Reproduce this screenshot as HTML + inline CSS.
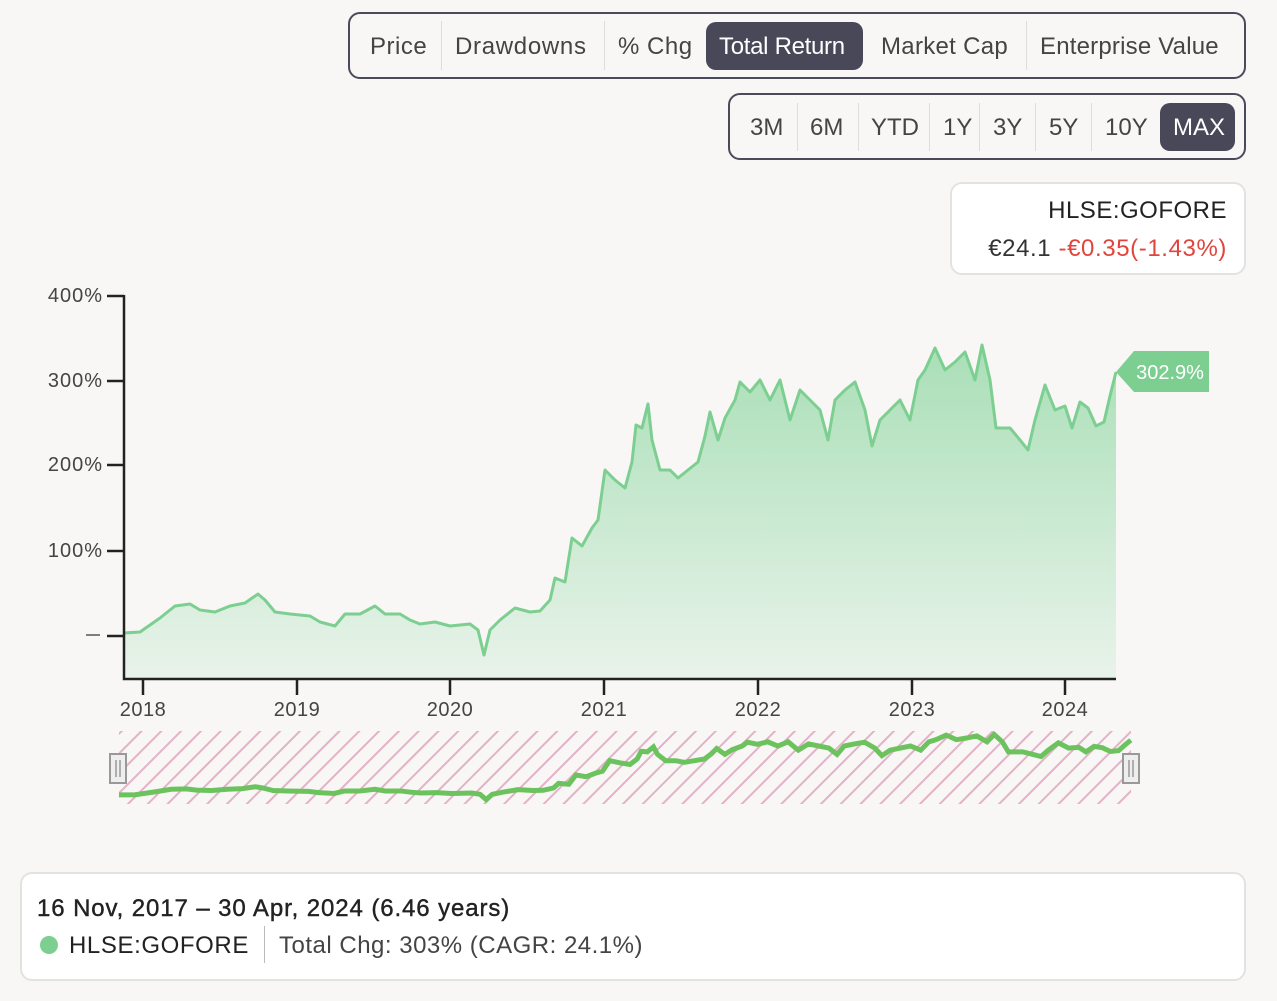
<!DOCTYPE html>
<html><head><meta charset="utf-8"><style>
*{margin:0;padding:0;box-sizing:border-box}
body{width:1277px;height:1001px;background:#f8f7f5;font-family:"Liberation Sans",sans-serif;position:relative;overflow:hidden;color:#333}
.box{position:absolute;border:2px solid #4a4a5a;border-radius:12px}
.t{position:absolute;font-size:24px;color:#444;white-space:nowrap;line-height:1}
.act{position:absolute;background:#494858;border-radius:10px}
.sep{position:absolute;width:1px;background:#ddd}
</style></head><body>
<div class="box" style="left:348px;top:12px;width:898px;height:67px"></div>
<div class="act" style="left:706px;top:22px;width:157px;height:48px"></div>
<div class="sep" style="left:441px;top:21px;height:49px"></div>
<div class="sep" style="left:604px;top:21px;height:49px"></div>
<div class="sep" style="left:1026px;top:21px;height:49px"></div>
<div class="t" style="left:370px;top:35px;letter-spacing:0.5px">Price</div>
<div class="t" style="left:455px;top:35px;letter-spacing:0.7px">Drawdowns</div>
<div class="t" style="left:618px;top:35px;letter-spacing:0.5px">% Chg</div>
<div class="t" style="left:719px;top:35px;color:#fff;letter-spacing:-0.3px">Total Return</div>
<div class="t" style="left:881px;top:35px;letter-spacing:0.3px">Market Cap</div>
<div class="t" style="left:1040px;top:35px;letter-spacing:0.2px">Enterprise Value</div>

<div class="box" style="left:728px;top:93px;width:518px;height:67px"></div>
<div class="act" style="left:1160px;top:103px;width:75px;height:48px"></div>
<div class="sep" style="left:797px;top:103px;height:48px"></div>
<div class="sep" style="left:858px;top:103px;height:48px"></div>
<div class="sep" style="left:929px;top:103px;height:48px"></div>
<div class="sep" style="left:979px;top:103px;height:48px"></div>
<div class="sep" style="left:1035px;top:103px;height:48px"></div>
<div class="sep" style="left:1091px;top:103px;height:48px"></div>
<div class="t" style="left:750px;top:116px">3M</div>
<div class="t" style="left:810px;top:116px">6M</div>
<div class="t" style="left:871px;top:116px">YTD</div>
<div class="t" style="left:943px;top:116px">1Y</div>
<div class="t" style="left:993px;top:116px">3Y</div>
<div class="t" style="left:1049px;top:116px">5Y</div>
<div class="t" style="left:1105px;top:116px">10Y</div>
<div class="t" style="left:1173px;top:116px;color:#fff">MAX</div>

<div style="position:absolute;left:950px;top:182px;width:296px;height:93px;background:#fff;border:2px solid #e2e2e0;border-radius:12px"></div>
<div class="t" style="right:50px;top:199px;color:#222;letter-spacing:0.5px">HLSE:GOFORE</div>
<div class="t" style="right:50px;top:237px;color:#333;letter-spacing:0.6px">€24.1 <span style="color:#e0453c">-€0.35(-1.43%)</span></div>

<svg width="1277" height="1001" style="position:absolute;left:0;top:0">
<defs>
<linearGradient id="g" x1="0" y1="0" x2="0" y2="1"><stop offset="0" stop-color="#a9dfb7"/><stop offset="1" stop-color="#e9f3ea"/></linearGradient>
<pattern id="h" width="14" height="14" patternUnits="userSpaceOnUse" patternTransform="rotate(45)"><rect width="14" height="14" fill="#f8f7f5"/><rect width="2" height="14" fill="#e3b2c8"/></pattern>
</defs>
<path d="M124,633 L140,632 150,625 160,618 175,606 190,604 200,610 215,612 230,606 245,603 258,594 265,600 275,612 290,614 310,616 320,622 335,626 345,614 360,614 375,606 385,614 400,614 410,620 420,624 435,622 450,626 470,624 478,630 484,655 490,630 500,620 515,608 530,612 540,611 550,600 555,578 565,582 572,538 582,546 592,528 598,520 605,470 615,480 625,488 632,462 636,425 642,428 648,404 652,440 660,470 670,470 678,478 688,470 698,462 705,436 710,412 718,440 725,418 735,400 740,382 750,392 760,380 770,400 780,380 790,420 800,390 810,400 820,410 828,440 835,400 845,390 855,382 865,410 872,446 880,420 890,410 900,400 910,420 918,380 925,370 935,348 945,370 955,362 965,352 975,380 982,345 990,380 996,428 1010,428 1020,440 1028,450 1035,420 1045,385 1055,410 1065,406 1072,428 1080,402 1088,408 1096,426 1104,422 1110,396 1116,372 L1116,679 L124,679 Z" fill="url(#g)"/>
<path d="M124,633 L140,632 150,625 160,618 175,606 190,604 200,610 215,612 230,606 245,603 258,594 265,600 275,612 290,614 310,616 320,622 335,626 345,614 360,614 375,606 385,614 400,614 410,620 420,624 435,622 450,626 470,624 478,630 484,655 490,630 500,620 515,608 530,612 540,611 550,600 555,578 565,582 572,538 582,546 592,528 598,520 605,470 615,480 625,488 632,462 636,425 642,428 648,404 652,440 660,470 670,470 678,478 688,470 698,462 705,436 710,412 718,440 725,418 735,400 740,382 750,392 760,380 770,400 780,380 790,420 800,390 810,400 820,410 828,440 835,400 845,390 855,382 865,410 872,446 880,420 890,410 900,400 910,420 918,380 925,370 935,348 945,370 955,362 965,352 975,380 982,345 990,380 996,428 1010,428 1020,440 1028,450 1035,420 1045,385 1055,410 1065,406 1072,428 1080,402 1088,408 1096,426 1104,422 1110,396 1116,372" fill="none" stroke="#7ccf91" stroke-width="3" stroke-linejoin="round"/>
<g stroke="#222" stroke-width="2.5" fill="none">
<path d="M124,295 V679 H1116"/>
<path d="M107,296 H124 M107,381 H124 M107,465 H124 M107,551 H124 M107,636 H124"/>
<path d="M143,679 V695 M297,679 V695 M450,679 V695 M604,679 V695 M758,679 V695 M912,679 V695 M1065,679 V695"/>
</g>
<path d="M86,635 H100" stroke="#555" stroke-width="1.5"/>
<g font-family="Liberation Sans,sans-serif" font-size="20" fill="#444" text-anchor="end" letter-spacing="1">
<text x="103" y="302">400%</text><text x="103" y="387">300%</text><text x="103" y="471">200%</text><text x="103" y="557">100%</text>
</g>
<g font-family="Liberation Sans,sans-serif" font-size="20" fill="#444" text-anchor="middle" letter-spacing="0.5">
<text x="143" y="716">2018</text><text x="297" y="716">2019</text><text x="450" y="716">2020</text><text x="604" y="716">2021</text><text x="758" y="716">2022</text><text x="912" y="716">2023</text><text x="1065" y="716">2024</text>
</g>
<polygon points="1116,372 1134,351 1209,351 1209,392 1134,392" fill="#7ccf91"/>
<text x="1170" y="379" font-family="Liberation Sans,sans-serif" font-size="20" fill="#fff" text-anchor="middle">302.9%</text>
<rect x="119" y="731" width="1012" height="73" fill="url(#h)"/>
<g transform="translate(-7.5,662) scale(1.02,0.21)"><path vector-effect="non-scaling-stroke" stroke-width="5" stroke="#6cc35e" fill="none" d="M124,633 L140,632 150,625 160,618 175,606 190,604 200,610 215,612 230,606 245,603 258,594 265,600 275,612 290,614 310,616 320,622 335,626 345,614 360,614 375,606 385,614 400,614 410,620 420,624 435,622 450,626 470,624 478,630 484,655 490,630 500,620 515,608 530,612 540,611 550,600 555,578 565,582 572,538 582,546 592,528 598,520 605,470 615,480 625,488 632,462 636,425 642,428 648,404 652,440 660,470 670,470 678,478 688,470 698,462 705,436 710,412 718,440 725,418 735,400 740,382 750,392 760,380 770,400 780,380 790,420 800,390 810,400 820,410 828,440 835,400 845,390 855,382 865,410 872,446 880,420 890,410 900,400 910,420 918,380 925,370 935,348 945,370 955,362 965,352 975,380 982,345 990,380 996,428 1010,428 1020,440 1028,450 1035,420 1045,385 1055,410 1065,406 1072,428 1080,402 1088,408 1096,426 1104,422 1110,396 1116,372"/></g>
<rect x="110" y="754" width="16" height="29" fill="#eee" stroke="#999" stroke-width="2"/>
<path d="M116,760 V777 M120,760 V777" stroke="#999" stroke-width="1.5"/>
<rect x="1123" y="754" width="16" height="29" fill="#eee" stroke="#999" stroke-width="2"/>
<path d="M1129,760 V777 M1133,760 V777" stroke="#999" stroke-width="1.5"/>
</svg>

<div style="position:absolute;left:20px;top:872px;width:1226px;height:109px;background:#fff;border:2px solid #e2e2e0;border-radius:12px"></div>
<div class="t" style="left:37px;top:897px;color:#222;letter-spacing:0.9px;-webkit-text-stroke:0.4px #222">16 Nov, 2017 – 30 Apr, 2024 (6.46 years)</div>
<div style="position:absolute;left:40px;top:936px;width:18px;height:18px;border-radius:50%;background:#7ccf91"></div>
<div class="t" style="left:69px;top:934px;color:#222;letter-spacing:0.6px">HLSE:GOFORE</div>
<div class="sep" style="left:264px;top:926px;height:37px;background:#bbb"></div>
<div class="t" style="left:279px;top:934px;letter-spacing:0.5px">Total Chg: 303% (CAGR: 24.1%)</div>
</body></html>
